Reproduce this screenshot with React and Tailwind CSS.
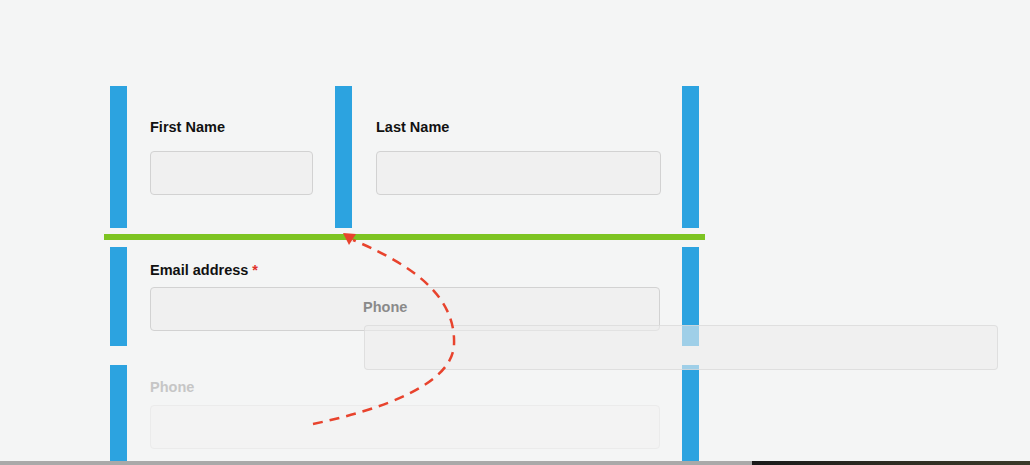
import React from 'react';

const Bar = () => <div className="w-[17px] shrink-0 self-stretch bg-[#2ca3e0]" />;

const Label = ({ children, faded }) => (
    <div className={`text-[14.5px] font-bold leading-[17px] ${faded ? 'text-[#c6c6c6]' : 'text-[#111111]'}`}>
        {children}
    </div>
);

export default function App() {
    return (
        <div className="relative flex h-[465px] w-[1030px] flex-col overflow-hidden bg-[#f4f5f5] font-['Liberation_Sans',Arial,sans-serif]">
            <div className="flex-1 overflow-hidden pl-[110px] pt-[86px]">
                {/* Row 1 */}
                <div className="flex h-[142px]">
                    <Bar />
                    <div className="w-[208px] pl-[23px] pt-[33px]">
                        <Label>First Name</Label>
                        <div className="mt-[15px] h-[44px] w-[163px] rounded-[4px] border border-[#d2d2d2] bg-[#f0f0f0]" />
                    </div>
                    <Bar />
                    <div className="w-[330px] pl-[24px] pt-[33px]">
                        <Label>Last Name</Label>
                        <div className="mt-[15px] h-[44px] w-[285px] rounded-[4px] border border-[#d2d2d2] bg-[#f0f0f0]" />
                    </div>
                    <Bar />
                </div>

                {/* Drop indicator */}
                <div className="ml-[-6px] mb-[7px] mt-[6px] h-[6px] w-[601px] bg-[#7dc422]" />

                {/* Row 2 */}
                <div className="flex h-[99px]">
                    <Bar />
                    <div className="w-[555px] pl-[23px] pt-[15px]">
                        <Label>
                            Email address <span className="text-[#e0322a]">*</span>
                        </Label>
                        <div className="mt-[8px] h-[44px] w-[510px] rounded-[4px] border border-[#d2d2d2] bg-[#f0f0f0]" />
                    </div>
                    <Bar />
                </div>

                {/* Row 3 */}
                <div className="mt-[19px] flex h-[120px]">
                    <Bar />
                    <div className="w-[555px] pl-[23px] pt-[14px]">
                        <Label faded>Phone</Label>
                        <div className="mt-[9px] h-[44px] w-[510px] rounded-[4px] border border-[#ebebeb] bg-[#f3f3f3]" />
                    </div>
                    <Bar />
                </div>
            </div>

            {/* Bottom strip */}
            <div className="flex h-[4px] shrink-0">
                <div className="w-[752px] bg-[#a9a9a9]" />
                <div className="flex-1 bg-gradient-to-r from-[#1a1a1a] via-[#2e2c22] to-[#3a3a2a]" />
            </div>

            {/* Dragged field preview */}
            <div className="absolute left-[363px] top-[299px] text-[14.5px] font-bold leading-[17px] text-[#8a8a8a]">
                Phone
            </div>
            <div className="absolute left-[364px] top-[325px] h-[45px] w-[634px] rounded-[4px] border border-[#d8d8d8]/70 bg-[#ececec]/60" />

            {/* Move arrow */}
            <svg className="pointer-events-none absolute left-0 top-0" width="1030" height="465">
                <path
                    d="M 313 424 C 380 410, 452 385, 454 345 C 456 300, 420 268, 353 240"
                    fill="none"
                    stroke="#e8432d"
                    strokeWidth="2.5"
                    strokeDasharray="10 7"
                />
                <polygon points="343,233 356,234 349,245" fill="#e8432d" />
            </svg>
        </div>
    );
}
